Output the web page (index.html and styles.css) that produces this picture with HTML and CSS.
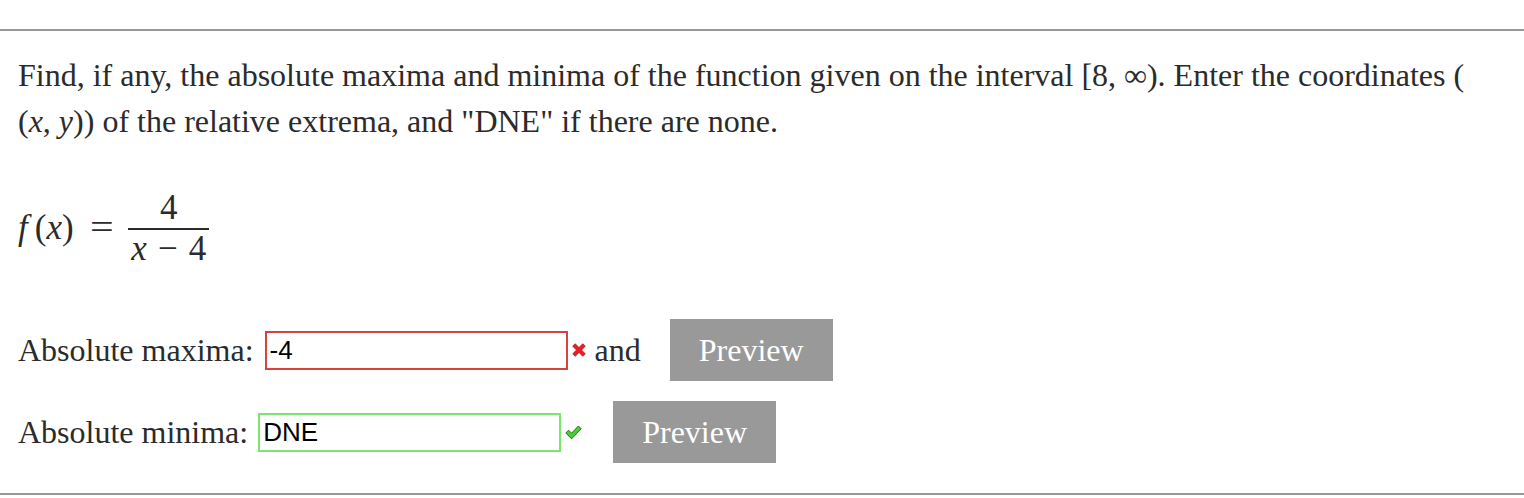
FILE: index.html
```html
<!DOCTYPE html>
<html lang="en">
  <head>
    <meta charset="UTF-8" />
    <title>Absolute extrema</title>
    <link rel="stylesheet" href="styles.css">
  </head>
  <body>
    <hr class="rule rule-top" />
    <div class="problem">
      <p class="question">
        Find, if any, the absolute maxima and minima of the function given on the interval
        <span class="math">[8,&nbsp;∞)</span>. Enter the coordinates (
        <span class="math">(<i>x</i>,&nbsp;<i>y</i>)</span>) of the relative extrema, and "DNE" if there are none.
      </p>

      <div class="formula">
        <span class="math"><i>f</i>&thinsp;(<i>x</i>)</span>
        <span class="eq">=</span>
        <span class="frac">
          <span class="num">4</span>
          <span class="den"><i>x</i><span class="minus">−</span>4</span>
        </span>
      </div>

      <div class="answer-row answer-row-first">
        <span class="label">Absolute maxima:</span>
        <input class="answer wrong" type="text" value="-4" />
        <svg class="mark" width="14" height="14" viewBox="0 0 14 14">
          <path d="M0.7 3.2 L3.2 0.7 L7 4.5 L10.8 0.7 L13.3 3.2 L9.5 7 L13.3 10.8 L10.8 13.3 L7 9.5 L3.2 13.3 L0.7 10.8 L4.5 7 Z"
                fill="#ec1c24" stroke="#9c1218" stroke-width="0.7" stroke-linejoin="round" />
        </svg>
        <span class="joiner">and</span>
        <button class="preview">Preview</button>
      </div>

      <div class="answer-row">
        <span class="label">Absolute minima:</span>
        <input class="answer right" type="text" value="DNE" />
        <svg class="mark mark-ok" width="17" height="15" viewBox="0 0 17 15">
          <path d="M0.8 8 L3.6 5.2 L6.6 8.2 L13.4 1 L16.2 3.8 L6.6 13.8 Z"
                fill="#45d12f" stroke="#1d5e14" stroke-width="0.9" stroke-linejoin="round" />
        </svg>
        <button class="preview preview-ok">Preview</button>
      </div>
    </div>
    <hr class="rule rule-bottom" />
  </body>
</html>
```

FILE: styles.css
```css
* {
  margin: 0;
  padding: 0;
  box-sizing: border-box;
}

body {
  background: #fff;
  color: #2b2b2b;
  font-family: "Liberation Serif", "Times New Roman", serif;
  font-size: 32px;
}

.rule {
  border: 0;
  border-top: 2px solid #999;
}

.rule-top {
  margin-top: 29px;
}

.rule-bottom {
  margin-top: 30px;
}

.problem {
  padding: 0 18px;
}

.question {
  margin-top: 21px;
  line-height: 46px;
}

.math {
  white-space: nowrap;
}

.math i {
  font-style: italic;
}

/* displayed fraction */
.formula {
  display: flex;
  align-items: center;
  margin-top: 49px;
  height: 70px;
  font-size: 35px;
}

.eq {
  margin: 0 17px 0 18px;
  transform: scaleX(1.2);
}

.frac {
  display: inline-flex;
  flex-direction: column;
  align-items: center;
}

.num {
  line-height: 30px;
  padding-bottom: 5px;
}

.den {
  border-top: 2px solid #2b2b2b;
  padding: 4px 3px 0;
  line-height: 30px;
}

.minus {
  margin: 0 11px;
}

.answer-row {
  display: flex;
  align-items: center;
  height: 62px;
}

.answer-row-first {
  margin-top: 56px;
}

.answer-row + .answer-row {
  margin-top: 20px;
}

.label {
  margin-right: 11px;
}

.answer {
  width: 303px;
  height: 39px;
  padding: 0 3px;
  font-family: "Liberation Sans", Arial, sans-serif;
  font-size: 26px;
  color: #000;
  background: #fff;
  outline: none;
}

.answer.wrong {
  border: 2px solid #d6423e;
}

.answer.right {
  border: 2px solid #7be66d;
  margin-left: -1px;
}

.mark {
  margin-left: 4px;
}

.mark-ok {
  margin-left: 4px;
}

.joiner {
  margin-left: 9px;
}

.preview {
  margin-left: 29px;
  height: 62px;
  padding: 0 29px;
  border: 0;
  background: #999;
  color: #fff;
  font-family: "Liberation Serif", "Times New Roman", serif;
  font-size: 32px;
}

.preview-ok {
  margin-left: 31px;
}
```
